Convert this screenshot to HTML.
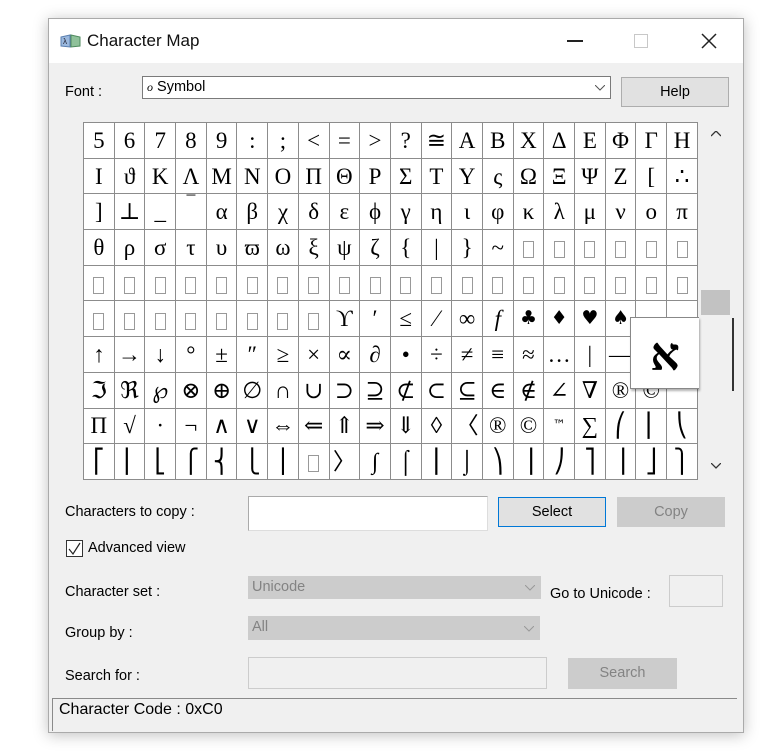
<!DOCTYPE html>
<html><head><meta charset="utf-8">
<style>
*{margin:0;padding:0;box-sizing:border-box}
body{width:768px;height:755px;background:#fff;position:relative;overflow:hidden;font-family:"Liberation Sans","DejaVu Sans",sans-serif;color:#000}
.win{position:absolute;left:48px;top:18px;width:696px;height:715px;background:#f0f0f0;border:1px solid #aaa;box-shadow:0 2px 14px rgba(0,0,0,.25)}
.tb{position:absolute;left:0;top:0;width:694px;height:44px;background:#fff}
.a{position:absolute;white-space:nowrap}
.lbl{font-size:14.5px}
table{position:absolute;left:83px;top:122px;width:615px;height:357px;border-collapse:collapse;table-layout:fixed;background:#fff}
td{border:1px solid #8c8c8c;text-align:center;vertical-align:middle;font-family:"Liberation Serif","DejaVu Serif",serif;font-size:23px;height:35.7px;line-height:1;overflow:hidden;padding:0}
td.s{font-size:19px;font-family:"DejaVu Sans",sans-serif}
i.b{display:inline-block;width:11px;height:17px;border:1px solid #999;vertical-align:middle}
.btn{position:absolute;background:#e1e1e1;border:1px solid #adadad;font-size:14.5px;text-align:center}
.dis{background:#cccccc;border:1px solid #cccccc;color:#838383}
</style></head><body>
<div class="win">
 <div class="tb"></div>
 <svg class="a" style="left:11px;top:14px" width="22" height="16" viewBox="0 0 22 16"><path d="M1 4 L10 2 L10 14 L1 13Z" fill="#9ab8de" stroke="#5a7fb0"/><path d="M11 2 L20 4 L20 13 L11 14Z" fill="#8fc19a" stroke="#4e8a5e"/><text x="3" y="11" font-size="8" fill="#223">λ</text></svg>
 <div class="a" style="left:38px;top:12px;font-size:17px;color:#111">Character Map</div>
 <div class="a" style="left:518px;top:21px;width:16px;height:1.5px;background:#222"></div>
 <div class="a" style="left:585px;top:15px;width:14px;height:14px;border:1px solid #c8c8c8"></div>
 <svg class="a" style="left:652px;top:14px" width="16" height="16"><path d="M1 1L15 15M15 1L1 15" stroke="#222" stroke-width="1.5"/></svg>
 <div class="a lbl" style="left:16px;top:65px">Font :</div>
 <div class="a" style="left:93px;top:57px;width:469px;height:23px;background:#fff;border:1px solid #7a7a7a;font-size:14.5px;padding:2px 0 0 4px"><span style="font-family:'Liberation Serif',serif;font-style:italic;font-size:12px">o</span> Symbol<svg style="position:absolute;right:5px;top:8px" width="10" height="6"><path d="M0 0L5 5L10 0" fill="none" stroke="#555"/></svg></div>
 <div class="btn" style="left:572px;top:58px;width:108px;height:30px;line-height:28px">Help</div>
 <svg class="a" style="left:662px;top:112px" width="10" height="6"><path d="M0 5L5 0L10 5" fill="none" stroke="#333" stroke-width="1.3"/></svg>
 <div class="a" style="left:652px;top:271px;width:29px;height:25px;background:#c2c2c2"></div>
 <div class="a" style="left:683px;top:299px;width:2px;height:73px;background:#333"></div>
 <svg class="a" style="left:662px;top:444px" width="10" height="6"><path d="M0 0L5 5L10 0" fill="none" stroke="#333" stroke-width="1.3"/></svg>
 <div class="a lbl" style="left:16px;top:485px">Characters to copy :</div>
 <div class="a" style="left:199px;top:477px;width:240px;height:35px;background:#fff;border:1px solid #aaa;border-bottom-color:#ddd;border-right-color:#ddd"></div>
 <div class="btn" style="left:449px;top:478px;width:108px;height:30px;line-height:28px;border:1.5px solid #0078d7">Select</div>
 <div class="btn dis" style="left:568px;top:478px;width:108px;height:30px;line-height:28px">Copy</div>
 <div class="a" style="left:17px;top:521px;width:17px;height:17px;border:1px solid #333;background:#fff"><svg width="15" height="15" style="position:absolute;left:0;top:0"><path d="M2 8L6 13L13 2" fill="none" stroke="#222" stroke-width="1.2"/></svg></div>
 <div class="a lbl" style="left:39px;top:521px">Advanced view</div>
 <div class="a lbl" style="left:16px;top:565px">Character set :</div>
 <div class="a dis" style="left:199px;top:557px;width:293px;height:23px;font-size:14.5px;padding:2px 0 0 3px">Unicode<svg style="position:absolute;right:5px;top:8px" width="10" height="6"><path d="M0 0L5 5L10 0" fill="none" stroke="#999"/></svg></div>
 <div class="a lbl" style="left:501px;top:567px">Go to Unicode :</div>
 <div class="a" style="left:620px;top:556px;width:54px;height:32px;border:1px solid #ccc"></div>
 <div class="a lbl" style="left:16px;top:606px">Group by :</div>
 <div class="a dis" style="left:199px;top:597px;width:292px;height:24px;font-size:14.5px;padding:2px 0 0 3px">All<svg style="position:absolute;right:5px;top:9px" width="10" height="6"><path d="M0 0L5 5L10 0" fill="none" stroke="#999"/></svg></div>
 <div class="a lbl" style="left:16px;top:649px">Search for :</div>
 <div class="a" style="left:199px;top:638px;width:299px;height:32px;border:1px solid #ccc"></div>
 <div class="btn dis" style="left:519px;top:639px;width:109px;height:31px;line-height:29px">Search</div>
 <div class="a" style="left:3px;top:679px;width:685px;height:33px;border-top:1px solid #8a8a8a;border-left:1px solid #8a8a8a;font-size:16px;padding:2px 0 0 6px">Character Code : 0xC0</div>
</div>
<table>
<tr><td>5</td><td>6</td><td>7</td><td>8</td><td>9</td><td>:</td><td>;</td><td>&lt;</td><td>=</td><td>&gt;</td><td>?</td><td>≅</td><td>Α</td><td>Β</td><td>Χ</td><td>Δ</td><td>Ε</td><td>Φ</td><td>Γ</td><td>Η</td></tr>
<tr><td>Ι</td><td>ϑ</td><td>Κ</td><td>Λ</td><td>Μ</td><td>Ν</td><td>Ο</td><td>Π</td><td>Θ</td><td>Ρ</td><td>Σ</td><td>Τ</td><td>Υ</td><td>ς</td><td>Ω</td><td>Ξ</td><td>Ψ</td><td>Ζ</td><td>[</td><td>∴</td></tr>
<tr><td>]</td><td>⊥</td><td>_</td><td style="vertical-align:top">‾</td><td>α</td><td>β</td><td>χ</td><td>δ</td><td>ε</td><td>ϕ</td><td>γ</td><td>η</td><td>ι</td><td>φ</td><td>κ</td><td>λ</td><td>μ</td><td>ν</td><td>ο</td><td>π</td></tr>
<tr><td>θ</td><td>ρ</td><td>σ</td><td>τ</td><td>υ</td><td>ϖ</td><td>ω</td><td>ξ</td><td>ψ</td><td>ζ</td><td>{</td><td>|</td><td>}</td><td>~</td><td><i class=b></i></td><td><i class=b></i></td><td><i class=b></i></td><td><i class=b></i></td><td><i class=b></i></td><td><i class=b></i></td></tr>
<tr><td><i class=b></i></td><td><i class=b></i></td><td><i class=b></i></td><td><i class=b></i></td><td><i class=b></i></td><td><i class=b></i></td><td><i class=b></i></td><td><i class=b></i></td><td><i class=b></i></td><td><i class=b></i></td><td><i class=b></i></td><td><i class=b></i></td><td><i class=b></i></td><td><i class=b></i></td><td><i class=b></i></td><td><i class=b></i></td><td><i class=b></i></td><td><i class=b></i></td><td><i class=b></i></td><td><i class=b></i></td></tr>
<tr><td><i class=b></i></td><td><i class=b></i></td><td><i class=b></i></td><td><i class=b></i></td><td><i class=b></i></td><td><i class=b></i></td><td><i class=b></i></td><td><i class=b></i></td><td>ϒ</td><td>′</td><td>≤</td><td>⁄</td><td>∞</td><td><i>f</i></td><td class=s>♣</td><td class=s>♦</td><td class=s>♥</td><td class=s>♠</td><td>↔</td><td>←</td></tr>
<tr><td>↑</td><td>→</td><td>↓</td><td>°</td><td>±</td><td>″</td><td>≥</td><td>×</td><td>∝</td><td>∂</td><td>•</td><td>÷</td><td>≠</td><td>≡</td><td>≈</td><td>…</td><td>|</td><td>—</td><td></td><td></td></tr>
<tr><td>ℑ</td><td>ℜ</td><td>℘</td><td>⊗</td><td>⊕</td><td>∅</td><td>∩</td><td>∪</td><td>⊃</td><td>⊇</td><td>⊄</td><td>⊂</td><td>⊆</td><td>∈</td><td>∉</td><td>∠</td><td>∇</td><td>®</td><td>©</td><td></td></tr>
<tr><td>Π</td><td>√</td><td>·</td><td>¬</td><td>∧</td><td>∨</td><td>⇔</td><td>⇐</td><td>⇑</td><td>⇒</td><td>⇓</td><td>◊</td><td>〈</td><td>®</td><td>©</td><td class=s style="font-size:13px">™</td><td>∑</td><td>⎛</td><td>⎜</td><td>⎝</td></tr>
<tr><td>⎡</td><td>⎢</td><td>⎣</td><td>⎧</td><td>⎨</td><td>⎩</td><td>⎪</td><td><i class=b></i></td><td>〉</td><td>∫</td><td>⌠</td><td>⎮</td><td>⌡</td><td>⎞</td><td>⎟</td><td>⎠</td><td>⎤</td><td>⎥</td><td>⎦</td><td>⎫</td></tr>
</table>
<div class="a" style="left:630px;top:317px;width:69px;height:72px;background:#fff;border:1px solid #888;border-right:none;box-shadow:1px 2px 2px rgba(0,0,0,.3);font-family:'DejaVu Serif',serif;font-size:46px;font-weight:bold;text-align:center;line-height:72px">א</div>
</body></html>
